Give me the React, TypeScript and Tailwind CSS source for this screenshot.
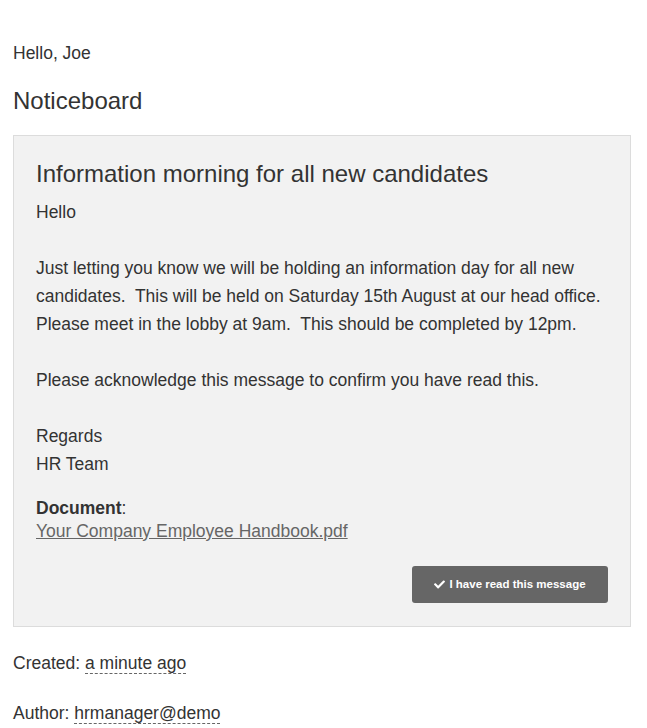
import { FaCheck } from 'react-icons/fa'

export default function App() {
  return (
    <div className="min-h-screen bg-white px-[13px] pt-[42px] text-[#333] font-['Liberation_Sans',Arial,sans-serif]">
      <p className="text-[17.5px] leading-[22px]">Hello, Joe</p>

      <h2 className="mt-[24px] text-[24px] leading-[26px]">Noticeboard</h2>

      <div className="mt-[21px] w-[618px] border border-[#dcdcdc] bg-[#f2f2f2] px-[22px] pt-[25px] pb-[23px]">
        <h3 className="text-[24px] leading-[26px]">Information morning for all new candidates</h3>

        <div className="mt-[11px] text-[17.5px] leading-[28px]">
          <p>Hello</p>
          <p>&nbsp;</p>
          <p>
            Just letting you know we will be holding an information day for all new candidates.&nbsp; This will be
            held on Saturday 15th August at our head office. Please meet in the lobby at 9am.&nbsp; This should be
            completed by 12pm.
          </p>
          <p>&nbsp;</p>
          <p>Please acknowledge this message to confirm you have read this.</p>
          <p>&nbsp;</p>
          <p>Regards</p>
          <p>HR Team</p>
        </div>

        <div className="mt-[19px] text-[17.5px] leading-[23px]">
          <p>
            <span className="font-bold">Document</span>:
          </p>
          <a href="#" className="text-[#666] underline">
            Your Company Employee Handbook.pdf
          </a>
        </div>

        <div className="mt-[23px] flex justify-end">
          <button className="flex h-[37px] w-[196px] items-center justify-center gap-[4px] rounded-[3px] bg-[#666] text-[11.5px] font-bold text-white">
            <FaCheck className="h-[11px] w-[11px]" />
            I have read this message
          </button>
        </div>
      </div>

      <p className="mt-[25px] text-[17.5px] leading-[22px]">
        Created:{' '}
        <span className="border-b border-dashed border-[#666]">a minute ago</span>
      </p>
      <p className="mt-[28px] text-[17.5px] leading-[22px]">
        Author:{' '}
        <span className="border-b border-dashed border-[#666]">hrmanager@demo</span>
      </p>
    </div>
  )
}
